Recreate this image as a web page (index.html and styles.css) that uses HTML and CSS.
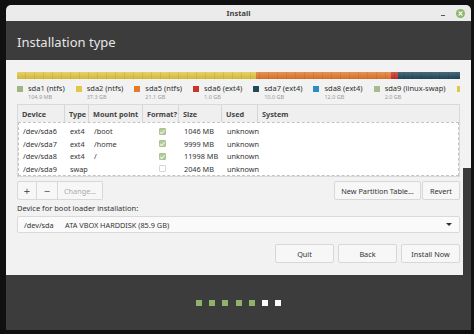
FILE: index.html
```html
<!DOCTYPE html>
<html>
<head>
<meta charset="utf-8">
<link rel="stylesheet" href="styles.css">
</head>
<body>
<div class="window">
  <div class="titlebar">
    <span class="title">Install</span>
    <div class="controls">
      <span class="min"></span>
      <span class="close"><svg width="9" height="9" viewBox="0 0 9 9"><circle cx="4.5" cy="4.5" r="4.5" fill="#8db76a"/><path d="M3 3 L6 6 M6 3 L3 6" stroke="#fff" stroke-width="1.2" stroke-linecap="round"/></svg></span>
    </div>
  </div>
  <div class="header"><h1>Installation type</h1></div>
  <div class="content">
    <div class="pbar">
      <span class="seg c2" style="width:239px"></span>
      <span class="seg c5" style="width:135px"></span>
      <span class="seg c6" style="width:7px"></span>
      <span class="seg c7" style="width:62px"></span>
    </div>
    <div class="legend">
      <div class="lg"><span class="sw c1"></span><div><div class="ln">sda1 (ntfs)</div><div class="ls">104.9 MB</div></div></div>
      <div class="lg"><span class="sw c2"></span><div><div class="ln">sda2 (ntfs)</div><div class="ls">37.3 GB</div></div></div>
      <div class="lg"><span class="sw c5"></span><div><div class="ln">sda5 (ntfs)</div><div class="ls">21.1 GB</div></div></div>
      <div class="lg"><span class="sw c6"></span><div><div class="ln">sda6 (ext4)</div><div class="ls">1.0 GB</div></div></div>
      <div class="lg"><span class="sw c7"></span><div><div class="ln">sda7 (ext4)</div><div class="ls">10.0 GB</div></div></div>
      <div class="lg"><span class="sw c8"></span><div><div class="ln">sda8 (ext4)</div><div class="ls">12.0 GB</div></div></div>
      <div class="lg"><span class="sw c9"></span><div><div class="ln">sda9 (linux-swap)</div><div class="ls">2.0 GB</div></div></div>
      <div class="lg"><span class="sw c2"></span></div>
    </div>
    <div class="table">
      <div class="row head">
        <div class="cell">Device</div><div class="cell">Type</div><div class="cell">Mount point</div><div class="cell">Format?</div><div class="cell">Size</div><div class="cell">Used</div><div class="cell last">System</div>
      </div>
      <div class="body">
        <div class="row"><div class="cell">/dev/sda6</div><div class="cell">ext4</div><div class="cell">/boot</div><div class="cell chk"><span class="cb on"></span></div><div class="cell">1046 MB</div><div class="cell">unknown</div><div class="cell"></div></div>
        <div class="row"><div class="cell">/dev/sda7</div><div class="cell">ext4</div><div class="cell">/home</div><div class="cell chk"><span class="cb on"></span></div><div class="cell">9999 MB</div><div class="cell">unknown</div><div class="cell"></div></div>
        <div class="row"><div class="cell">/dev/sda8</div><div class="cell">ext4</div><div class="cell">/</div><div class="cell chk"><span class="cb on"></span></div><div class="cell">11998 MB</div><div class="cell">unknown</div><div class="cell"></div></div>
        <div class="row"><div class="cell">/dev/sda9</div><div class="cell">swap</div><div class="cell"></div><div class="cell chk"><span class="cb"></span></div><div class="cell">2046 MB</div><div class="cell">unknown</div><div class="cell"></div></div>
      </div>
    </div>
    <div class="actions">
      <div class="group">
        <button class="btn sq">+</button><button class="btn sq">&minus;</button><button class="btn dim">Change…</button>
      </div>
      <div class="group right">
        <button class="btn npt">New Partition Table…</button><button class="btn rev">Revert</button>
      </div>
    </div>
    <div class="bl-label">Device for boot loader installation:</div>
    <div class="select">
      <span class="dev">/dev/sda</span><span class="disk">ATA VBOX HARDDISK (85.9 GB)</span>
      <span class="arrow"></span>
    </div>
    <div class="nav">
      <button class="btn nb">Quit</button><button class="btn nb">Back</button><button class="btn nb">Install Now</button>
    </div>
  </div>
  <div class="footer">
    <span class="dot g"></span><span class="dot g"></span><span class="dot g"></span><span class="dot g"></span><span class="dot g"></span><span class="dot w"></span><span class="dot w"></span>
  </div>
  <div class="edge-shadow"></div>
</div>
</body>
</html>
```
FILE: styles.css
```css
* { box-sizing: border-box; }
html, body { margin: 0; padding: 0; }
body {
  width: 474px;
  height: 334px;
  overflow: hidden;
  background: #101010;
  font-family: "Noto Sans", "DejaVu Sans", sans-serif;
  color: #333;
  padding: 5px 0 0 6px;
}
.window {
  width: 465px;
  display: flex;
  flex-direction: column;
  position: relative;
}
.edge-shadow {
  position: absolute;
  left: 457px;
  top: 163px;
  width: 8px;
  height: 107px;
  background: #3a3a3a;
}
.titlebar {
  height: 16px;
  background: #ebebeb;
  border-radius: 5px 5px 0 0;
  display: flex;
  align-items: center;
  justify-content: center;
  position: relative;
}
.title {
  font-size: 7.5px;
  font-weight: bold;
  color: #444;
}
.controls {
  position: absolute;
  right: 6px;
  top: 4px;
  display: flex;
  align-items: center;
  gap: 11px;
}
.min {
  width: 4px;
  height: 1px;
  background: #555;
  margin-top: 4px;
}
.close { display: flex; }
.header {
  height: 39px;
  background: #3c3c3c;
  display: flex;
  align-items: center;
  padding-left: 11px;
}
.header h1 {
  margin: 0;
  font-size: 13px;
  font-weight: normal;
  color: #e6e6e6;
  padding-top: 2px;
}
.content {
  background: #f2f2f2;
  height: 215px;
  padding: 12px 11px 0 11px;
}
.pbar {
  height: 7px;
  display: flex;
  position: relative;
}
.pbar::after {
  content: "";
  position: absolute;
  inset: 0;
  background: repeating-linear-gradient(90deg, rgba(0,0,0,0) 0, rgba(0,0,0,0) 8px, rgba(0,0,0,0.07) 8px, rgba(0,0,0,0.07) 9px),
              linear-gradient(180deg, rgba(255,255,255,0.18), rgba(0,0,0,0.08));
}
.seg { height: 100%; display: block; }
.c1 { background: #9db784; }
.c2 { background: #e2c744; }
.c5 { background: #e27b2e; }
.c6 { background: #c8362a; }
.c7 { background: #224a5e; }
.c8 { background: #2a8fc0; }
.c9 { background: #a7bb8e; }
.legend {
  display: flex;
  gap: 11px;
  margin-top: 5px;
  height: 19px;
  overflow: hidden;
  white-space: nowrap;
}
.lg { display: flex; align-items: flex-start; gap: 5px; flex: none; }
.sw { width: 6px; height: 6px; margin-top: 2px; flex: none; }
.ln { font-size: 7.5px; line-height: 9px; color: #2e2e2e; }
.ls { font-size: 5.5px; line-height: 8px; color: #9a9a9a; }
.table {
  margin-top: 1px;
  border: 1px solid #d9d9d9;
  background: #fff;
}
.row {
  display: grid;
  grid-template-columns: 47px 24px 54px 36px 43px 36px 1fr;
  font-size: 7.3px;
  height: 12.5px;
  align-items: center;
}
.row .cell { padding-left: 4px; white-space: nowrap; overflow: hidden; }
.row.head {
  height: 17px;
  background: #efefef;
  font-weight: bold;
  color: #444;
}
.row.head .cell {
  height: 100%;
  display: flex;
  align-items: center;
  border-right: 1px solid #d6d6d6;
}
.row.head .cell.last { border-right: none; }
.body {
  border: 1px dashed #c4c4c4;
  height: 54px;
  padding-top: 2px;
}
.row .cell.chk { display: flex; justify-content: center; padding-left: 0; }
.cb {
  width: 7px;
  height: 7px;
  border: 1px solid #d6d6d6;
  background: #fff;
  border-radius: 1px;
  display: block;
}
.cb.on {
  background: #b3cc9b;
  border-color: #a9c390;
  position: relative;
}
.cb.on::after {
  content: "";
  position: absolute;
  left: 1.5px;
  top: 0px;
  width: 2px;
  height: 3.5px;
  border: solid #eef5e6;
  border-width: 0 1px 1px 0;
  transform: rotate(45deg);
}
.actions {
  display: flex;
  justify-content: space-between;
  margin-top: 4px;
  height: 19px;
}
.group { display: flex; }
.group.right { gap: 1px; }
.btn {
  font-family: inherit;
  font-size: 7.3px;
  color: #333;
  background: #f7f7f7;
  border: 1px solid #d8d8d8;
  border-radius: 2px;
  height: 19px;
  padding: 0;
  margin: 0;
}
.btn.sq { width: 20px; font-size: 11px; color: #555; border-radius: 0; line-height: 1; }
.btn.sq:first-child { border-radius: 2px 0 0 2px; width: 20px; }
.btn.sq + .btn.sq { width: 21px; border-left: none; }
.btn.dim { width: 45px; color: #aaa; border-left: none; border-radius: 0 2px 2px 0; }
.btn.npt { width: 87px; }
.btn.rev { width: 38px; }
.bl-label {
  font-size: 7.5px;
  color: #333;
  margin-top: 3px;
  line-height: 10px;
}
.select {
  margin-top: 3px;
  height: 17px;
  background: #fafafa;
  border: 1px solid #dadada;
  border-radius: 2px;
  display: flex;
  align-items: center;
  font-size: 7.3px;
  padding-left: 6px;
  position: relative;
}
.dev { width: 41px; }
.arrow {
  position: absolute;
  right: 7px;
  top: 6px;
  width: 0;
  height: 0;
  border-left: 3px solid transparent;
  border-right: 3px solid transparent;
  border-top: 3.5px solid #333;
}
.nav {
  display: flex;
  justify-content: flex-end;
  gap: 4px;
  margin-top: 11px;
}
.btn.nb { width: 59px; }
.footer {
  height: 55px;
  background: #3c3c3c;
  display: flex;
  align-items: center;
  justify-content: center;
  gap: 7.3px;
}
.dot { width: 6px; height: 6px; display: block; }
.dot.g { background: #8db46a; }
.dot.w { background: #fafafa; }
```
